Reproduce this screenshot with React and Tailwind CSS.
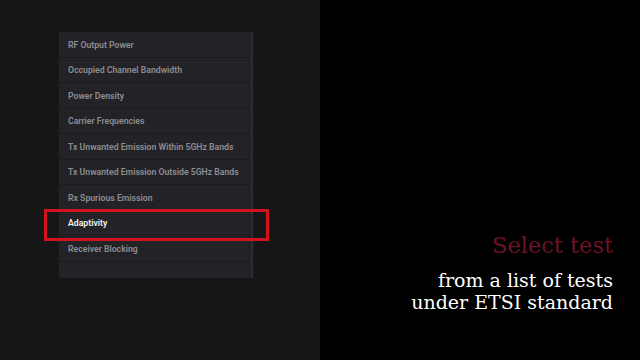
import React from "react";

const tests = [
  "RF Output Power",
  "Occupied Channel Bandwidth",
  "Power Density",
  "Carrier Frequencies",
  "Tx Unwanted Emission Within 5GHz Bands",
  "Tx Unwanted Emission Outside 5GHz Bands",
  "Rx Spurious Emission",
  "Adaptivity",
  "Receiver Blocking",
];

export default function App() {
  return (
    <div className="flex w-[640px] h-[360px] bg-black overflow-hidden">
      {/* Left: test list */}
      <div className="relative w-[320px] h-full bg-[#161616] pt-[32px] pl-[59px]">
        <div className="flex w-[196px] h-[246px] bg-[#1d1d20]">
          <div className="flex flex-col w-[190px]">
            {tests.map((t) => (
              <div
                key={t}
                className={`flex items-center h-[25.5px] pl-[9px] pt-[2px] bg-[#232327] border-b border-[#1a1a1c] text-[8.7px] font-semibold ${
                  t === "Adaptivity" ? "text-[#f2f2f2]" : "text-[#8d8d92]"
                }`}
                style={{ fontFamily: "Roboto, 'Liberation Sans', sans-serif" }}
              >
                {t}
              </div>
            ))}
            <div className="flex-1 bg-[#232327]" />
          </div>
          <div className="w-[6px] bg-[#19191b] flex">
            <div className="w-[3px] ml-[1px] bg-[#2a2a2e]" />
          </div>
        </div>
        {/* highlight box */}
        <div className="absolute left-[44px] top-[209px] w-[225px] h-[32px] border-[3px] border-[#d2131d]" />
      </div>

      {/* Right: caption */}
      <div
        className="flex flex-col items-end w-[320px] h-full pr-[27px] pt-[231px]"
        style={{ fontFamily: "'DejaVu Serif', 'Liberation Serif', serif" }}
      >
        <div className="text-[22.5px] leading-[28px] text-[#6e1229]">Select test</div>
        <div className="mt-[10px] text-[19px] leading-[22px] text-white text-right">
          <div>from a list of tests</div>
          <div>under ETSI standard</div>
        </div>
      </div>
    </div>
  );
}
